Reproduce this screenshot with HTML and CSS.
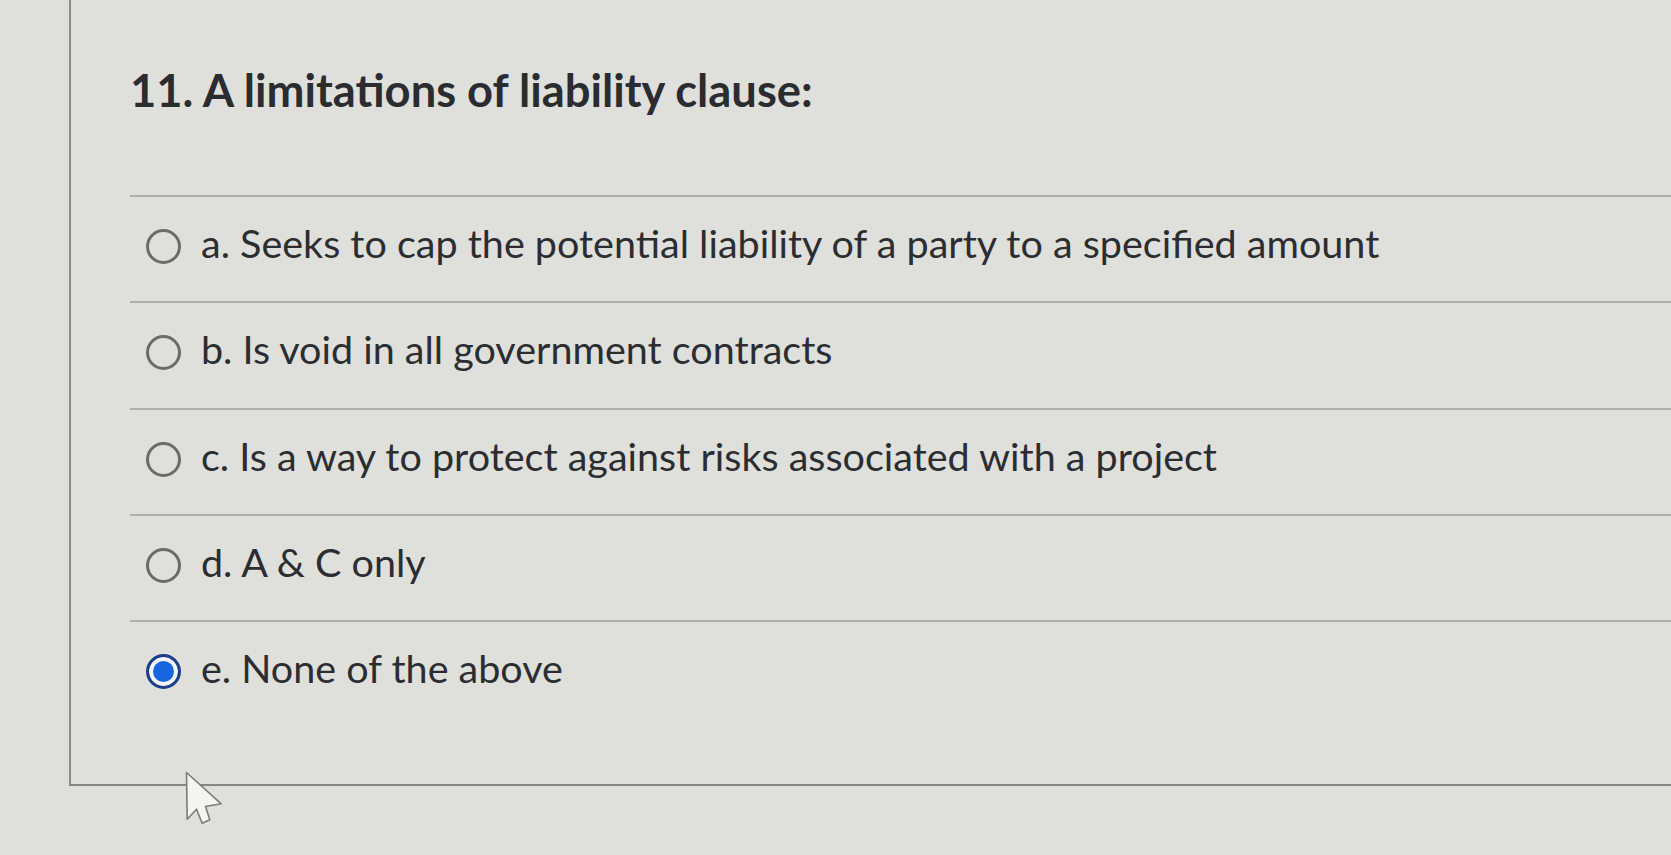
FILE: index.html
```html
<!DOCTYPE html>
<html lang="en">
<head>
<meta charset="utf-8">
<title>Question 11</title>
<link rel="stylesheet" href="styles.css">
</head>
<body>
<div class="quiz">
  <h1 class="q-title">11. A limitations of liability clause:</h1>
  <div class="options">
    <label class="option"><span class="radio"></span><span class="label">a. Seeks to cap the potential liability of a party to a specified amount</span></label>
    <label class="option"><span class="radio"></span><span class="label">b. Is void in all government contracts</span></label>
    <label class="option"><span class="radio"></span><span class="label">c. Is a way to protect against risks associated with a project</span></label>
    <label class="option"><span class="radio"></span><span class="label">d. A &amp; C only</span></label>
    <label class="option"><span class="radio checked"></span><span class="label">e. None of the above</span></label>
  </div>
</div>
<svg class="cursor" width="38" height="54" viewBox="-1.5 -1.5 38 54">
  <polygon points="0,0 0.7,46.7 10,36.7 15.7,50.7 23.3,47.3 19,34 34.7,31.3" fill="#f4f5f3" stroke="#7b7c7b" stroke-width="1.6" stroke-linejoin="round"/>
</svg>
</body>
</html>
```
FILE: styles.css
```css
html, body {
  margin: 0;
  padding: 0;
  background: #dfe0dc;
  overflow: hidden;
}
body {
  width: 1671px;
  height: 855px;
  position: relative;
  font-family: Lato, "Open Sans", sans-serif;
  color: #2b2d31;
}
.quiz {
  box-sizing: border-box;
  margin-left: 69px;
  height: 786px;
  border-left: 2px solid #8a8c89;
  border-bottom: 2px solid #858784;
  padding-left: 59px;
}
.q-title {
  margin: 0;
  padding-top: 63px;
  font-size: 45.3px;
  line-height: 54px;
  font-weight: 700;
  color: #2a2c30;
  height: 132px;
  box-sizing: content-box;
}
.options {
  display: flex;
  flex-direction: column;
}
.option {
  box-sizing: border-box;
  height: 106.25px;
  border-top: 2px solid #aeafad;
  display: flex;
  align-items: flex-start;
  padding-top: 22px;
}
.radio {
  box-sizing: border-box;
  width: 35px;
  height: 35px;
  border-radius: 50%;
  border: 3px solid #6a6b6a;
  margin-left: 16px;
  margin-top: 10px;
  margin-right: 20px;
  flex: none;
}
.radio.checked {
  border: 3px solid #1e3f86;
  background: #1866df;
  box-shadow: inset 0 0 0 4px #f3f5f7;
}
.label {
  font-size: 39.5px;
  line-height: 47px;
  font-weight: 400;
}
.cursor {
  position: absolute;
  left: 184.5px;
  top: 770.5px;
}
```
